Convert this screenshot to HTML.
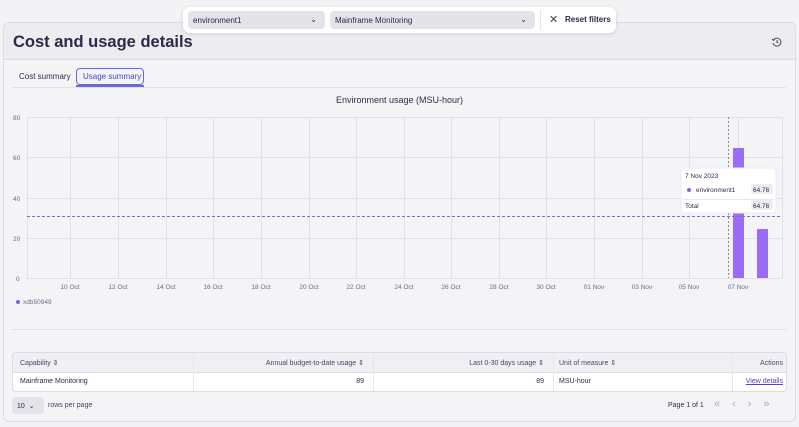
<!DOCTYPE html>
<html><head><style>
*{box-sizing:border-box;margin:0;padding:0}
body{width:799px;height:427px;background:#f3f3f6;font-family:"Liberation Sans",sans-serif;color:#2b2b47;position:relative;overflow:hidden}
.abs{position:absolute}
.panel{left:3px;top:22px;width:793px;height:400px;border:1px solid #dcdce4;border-radius:6px;background:#f4f4f7}
.hdr{left:4px;top:23px;width:791px;height:37px;background:#ececf1;border-bottom:1px solid #dcdce4;border-radius:6px 6px 0 0}
.t{font-size:11px;color:#45456a}
</style></head><body>
<div class="abs panel"></div>
<div class="abs hdr"></div>
<div class="abs" style="left:13px;top:33px;font-size:16.5px;font-weight:bold;color:#2b2b47">Cost and usage details</div>
<svg class="abs" style="left:771px;top:36px" width="12" height="12" viewBox="0 0 12 12"><path d="M2.5 4 A4 4 0 1 1 2 7" fill="none" stroke="#555" stroke-width="1"/><path d="M1 3 L2.5 4.5 L4 3" fill="none" stroke="#555"/><path d="M6 4 V6.5 H7.5" fill="none" stroke="#555"/></svg>
<div class="abs" style="left:183px;top:7px;width:433px;height:26px;background:#fff;border-radius:7px;box-shadow:0 1px 4px rgba(0,0,0,.12)"></div>
<div class="abs t" style="left:188px;top:11px;width:137px;height:18px;background:#e3e3e9;border-radius:4px;font-size:8px;padding:5px 0 0 5px;color:#2b2b47">environment1<span style="position:absolute;right:8px;top:4px">⌄</span></div>
<div class="abs t" style="left:330px;top:11px;width:205px;height:18px;background:#e3e3e9;border-radius:4px;font-size:8px;padding:5px 0 0 5px;color:#2b2b47">Mainframe Monitoring<span style="position:absolute;right:8px;top:4px">⌄</span></div>
<div class="abs" style="left:540px;top:10px;width:1px;height:20px;background:#e3e3e9"></div>
<div class="abs" style="left:549px;top:13px;font-size:11px;color:#444">✕</div>
<div class="abs" style="left:565px;top:15px;font-size:8px;font-weight:bold;color:#2b2b47">Reset filters</div>
<div class="abs" style="left:19px;top:72px;font-size:8px;color:#2b2b47">Cost summary</div>
<div class="abs" style="left:76px;top:68px;width:68px;height:17px;border:1.5px solid #6a66e0;border-radius:4px;font-size:8px;color:#4a45c8;padding:3px 0 0 6px">Usage summary</div>
<div class="abs" style="left:76px;top:85px;width:68px;height:2px;background:#6a66e0"></div>
<div class="abs" style="left:12px;top:87px;width:774px;height:1px;background:#e0e0e7"></div>
<div class="abs" style="left:0;top:95px;width:799px;text-align:center;font-size:9px;color:#2b2b47">Environment usage (MSU-hour)</div>
<svg class="abs" style="left:0;top:0" width="799" height="427">
<g stroke="#e0e0e8" stroke-width="1" fill="none">
<rect x="27.5" y="117.5" width="755" height="161"/>
<line x1="27" y1="157.5" x2="782" y2="157.5"/><line x1="27" y1="198.5" x2="782" y2="198.5"/><line x1="27" y1="238.5" x2="782" y2="238.5"/>
</g>
<g stroke="#e0e0e8">
<line x1="70.5" y1="117" x2="70.5" y2="278"/><line x1="118.5" y1="117" x2="118.5" y2="278"/><line x1="166.5" y1="117" x2="166.5" y2="278"/><line x1="213.5" y1="117" x2="213.5" y2="278"/><line x1="261.5" y1="117" x2="261.5" y2="278"/><line x1="309.5" y1="117" x2="309.5" y2="278"/><line x1="356.5" y1="117" x2="356.5" y2="278"/><line x1="404.5" y1="117" x2="404.5" y2="278"/><line x1="451.5" y1="117" x2="451.5" y2="278"/><line x1="499.5" y1="117" x2="499.5" y2="278"/><line x1="546.5" y1="117" x2="546.5" y2="278"/><line x1="594.5" y1="117" x2="594.5" y2="278"/><line x1="642.5" y1="117" x2="642.5" y2="278"/><line x1="689.5" y1="117" x2="689.5" y2="278"/><line x1="738.5" y1="117" x2="738.5" y2="278"/>
</g>
<g font-family="Liberation Sans" font-size="6.5" fill="#6a6a85">
<text x="13" y="120">80</text><text x="13" y="160">60</text><text x="13" y="201">40</text><text x="13" y="241">20</text><text x="16" y="281">0</text>
<g text-anchor="middle"><text x="70" y="289">10 Oct</text><text x="118" y="289">12 Oct</text><text x="166" y="289">14 Oct</text><text x="213" y="289">16 Oct</text><text x="261" y="289">18 Oct</text><text x="309" y="289">20 Oct</text><text x="356" y="289">22 Oct</text><text x="404" y="289">24 Oct</text><text x="451" y="289">26 Oct</text><text x="499" y="289">28 Oct</text><text x="546" y="289">30 Oct</text><text x="594" y="289">01 Nov</text><text x="642" y="289">03 Nov</text><text x="689" y="289">05 Nov</text><text x="738" y="289">07 Nov</text></g>
<text x="23" y="304">xdb50949</text>
</g>
<circle cx="18" cy="302" r="2" fill="#8c5cf0"/>
<rect x="733" y="148" width="11" height="130" fill="#9b6cf6"/>
<rect x="757" y="229" width="11" height="49" fill="#9b6cf6"/>
<line x1="728.5" y1="117" x2="728.5" y2="278" stroke="#8888aa" stroke-dasharray="2,2"/>
<line x1="27" y1="216.5" x2="782" y2="216.5" stroke="#7a70c0" stroke-dasharray="3,2"/>
<rect x="681" y="168" width="95" height="45" rx="4" fill="#fff" stroke="#ececf1"/>
<line x1="683" y1="199.5" x2="774" y2="199.5" stroke="#e6e6ec"/>
<rect x="751" y="184" width="22" height="10" rx="2" fill="#ececf1"/>
<rect x="751" y="200" width="22" height="10" rx="2" fill="#ececf1"/>
<circle cx="689" cy="190" r="2" fill="#8c5cf0"/>
<g font-family="Liberation Sans" font-size="6.5" fill="#2b2b47"><text x="685" y="178">7 Nov 2023</text><text x="696" y="192">environment1</text><text x="753" y="192">64.76</text><text x="685" y="208">Total</text><text x="753" y="208">64.76</text></g>
<line x1="12" y1="329.5" x2="786" y2="329.5" stroke="#e0e0e7"/>
</svg>
<div class="abs" style="left:12px;top:352px;width:775px;height:40px;border:1px solid #dcdce4;border-radius:4px;background:#fff;overflow:hidden">
<div class="abs" style="left:0;top:0;width:775px;height:20px;background:#f0f0f4;border-bottom:1px solid #dcdce4"></div>
<div class="abs" style="left:180px;top:0;width:1px;height:40px;background:#e6e6ec"></div>
<div class="abs" style="left:360px;top:0;width:1px;height:40px;background:#e6e6ec"></div>
<div class="abs" style="left:540px;top:0;width:1px;height:40px;background:#e6e6ec"></div>
<div class="abs" style="left:719px;top:0;width:1px;height:40px;background:#e6e6ec"></div>
<div class="abs" style="left:7px;top:6px;font-size:7px;color:#45456a">Capability ⇕</div>
<div class="abs" style="left:180px;width:171px;top:6px;font-size:7px;color:#45456a;text-align:right">Annual budget-to-date usage ⇕</div>
<div class="abs" style="left:360px;width:171px;top:6px;font-size:7px;color:#45456a;text-align:right">Last 0-30 days usage ⇕</div>
<div class="abs" style="left:546px;top:6px;font-size:7px;color:#45456a">Unit of measure ⇕</div>
<div class="abs" style="left:720px;width:50px;top:7px;font-size:7px;color:#45456a;text-align:right">Actions</div>
<div class="abs" style="left:7px;top:25px;font-size:7px;color:#2b2b47">Mainframe Monitoring</div>
<div class="abs" style="left:180px;width:171px;top:25px;font-size:7px;text-align:right">89</div>
<div class="abs" style="left:360px;width:171px;top:25px;font-size:7px;text-align:right">89</div>
<div class="abs" style="left:546px;top:25px;font-size:7px">MSU-hour</div>
<div class="abs" style="left:720px;width:50px;top:25px;font-size:7px;text-align:right;color:#4a45c8;text-decoration:underline">View details</div>
</div>
<div class="abs" style="left:12px;top:397px;width:32px;height:17px;background:#e3e3e9;border-radius:4px;font-size:7px;padding:5px 0 0 5px">10 &nbsp;⌄</div>
<div class="abs" style="left:48px;top:402px;font-size:7px;color:#45456a">rows per page</div>
<div class="abs" style="left:668px;top:402px;font-size:7px;color:#2b2b47">Page 1 of 1</div>
<div class="abs" style="left:714px;top:398px;font-size:11px;color:#aaaabb;letter-spacing:12px">«‹›»</div>
</body></html>
